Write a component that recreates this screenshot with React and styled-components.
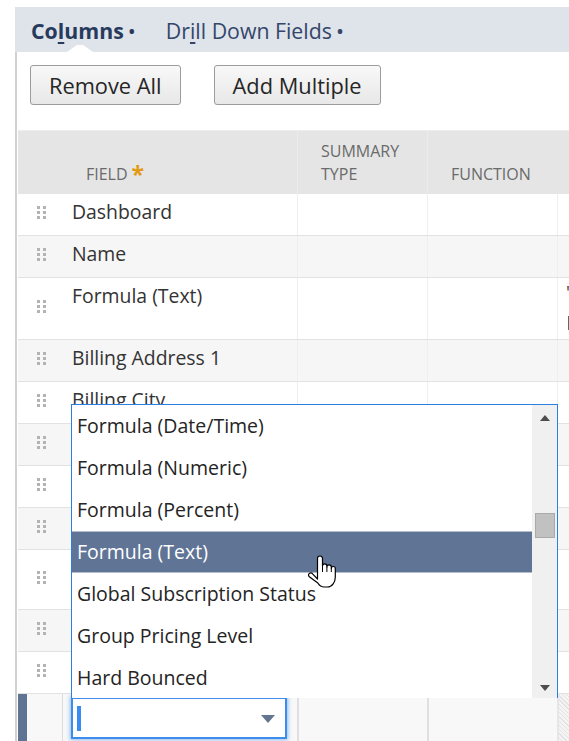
import React from 'react';
import styled, { createGlobalStyle } from 'styled-components';

const GlobalStyle = createGlobalStyle`
  html, body { margin: 0; padding: 0; background: #fff; overflow: hidden; }
  body { font-family: "Open Sans", "Liberation Sans", sans-serif; }
  * { box-sizing: border-box; }
`;

const COLS = '45px 234px 130px 130px 1fr';

const Page = styled.div`
  position: relative;
  width: 569px;
  height: 741px;
  overflow: hidden;
  padding: 7px 0 0 15px;
`;

const TabBar = styled.div`
  height: 45px;
  background: #dfe3ea;
  display: flex;
  align-items: stretch;
  gap: 31px;
  padding-left: 16px;
`;

const Tab = styled.div`
  position: relative;
  display: flex;
  align-items: center;
  padding-top: 2px;
  font-size: 21.3px;
  color: ${p => (p.$active ? '#273a5c' : '#34466a')};
  font-weight: ${p => (p.$active ? 700 : 400)};
  white-space: nowrap;
  u { text-decoration-thickness: 1.5px; text-underline-offset: 3px; }
  ${p => p.$active && `
    &::after {
      content: '';
      position: absolute;
      bottom: 0;
      left: 36px;
      width: 26px;
      height: 7px;
      background: #fff;
      clip-path: polygon(0 100%, 38% 0, 62% 0, 100% 100%);
    }
  `}
`;

const Bullet = styled.span`
  margin-left: 5px;
  font-weight: 700;
  font-size: 16px;
`;

const Panel = styled.div`
  border-left: 2px solid #d2d2d2;
  padding-left: 1px;
`;

const ButtonRow = styled.div`
  display: flex;
  gap: 33px;
  padding: 13px 0 25px 12px;
`;

const Button = styled.button`
  height: 40px;
  padding: 0 18px;
  font-family: inherit;
  font-size: 21.8px;
  color: #262626;
  background: linear-gradient(#f8f8f8, #e8e8e8);
  border: 1px solid #9c9c9c;
  border-radius: 3px;
`;

const Table = styled.div`
  width: 720px;
`;

const HeaderRow = styled.div`
  display: grid;
  grid-template-columns: ${COLS};
  height: 64px;
  background: #e5e5e5;
  border-top: 1px solid #eeeeee;
`;

const HeaderCell = styled.div`
  display: flex;
  align-items: flex-end;
  padding: 0 0 10px 23px;
  font-size: 16px;
  line-height: 23px;
  color: #6a6a6a;
  border-left: ${p => (p.$sep ? '1px solid #ececec' : 'none')};
`;

const Required = styled.span`
  color: #e19a12;
  font-size: 23px;
  font-weight: 700;
  margin-left: 4px;
  align-self: flex-start;
  line-height: 1;
  margin-top: 32px;
`;

const Row = styled.div`
  display: grid;
  grid-template-columns: ${COLS};
  height: ${p => p.$h}px;
  background: ${p => (p.$alt ? '#f6f6f6' : '#ffffff')};
  border-bottom: 1px solid #e2e2e2;
`;

const HandleCell = styled.div`
  display: flex;
  align-items: center;
  padding: 0 0 4px 19px;
`;

const Dots = styled.div`
  display: grid;
  grid-template-columns: 3px 3px;
  grid-auto-rows: 3px;
  column-gap: 3px;
  row-gap: 2px;
  span { background: #b3b3b3; }
`;

const FieldCell = styled.div`
  padding: 6px 0 0 9px;
  font-size: 19.4px;
  line-height: 24px;
  color: #333;
  white-space: nowrap;
`;

const Cell = styled.div`
  border-left: 1px solid #efefef;
`;

const PreviewCell = styled.div`
  border-left: 1px solid #efefef;
  display: flex;
  flex-direction: column;
  padding: 4px 0 0 8px;
  font-size: 18px;
  line-height: 20px;
  color: #444;
  i {
    display: block;
    width: 2px;
    height: 14px;
    margin: 14px 0 0 2px;
    background: #666;
  }
`;

const EditRow = styled.div`
  display: grid;
  grid-template-columns: ${COLS};
  height: 60px;
  background: #f8f8f8;
`;

const EditHandle = styled.div`
  border-left: 9px solid #5f7393;
  border-right: 1px solid #dcdcdc;
`;

const EditField = styled.div`
  padding: 3px 9px 0 8px;
`;

const EditCell = styled.div`
  border-left: 2px solid #e0e0e0;
`;

const Hatch = styled.div`
  border-left: 2px solid #e6e6e6;
  background: repeating-linear-gradient(45deg, #f4f4f4 0 2px, #e3e3e3 2px 3px);
`;

const SelectBox = styled.div`
  position: relative;
  width: 216px;
  height: 42px;
  background: #fff;
  border: 2px solid #3e8dea;
  box-shadow: 0 0 4px 1px rgba(62, 141, 234, 0.55);
  display: flex;
  align-items: center;
  justify-content: space-between;
  padding: 0 10px 0 4px;
`;

const Caret = styled.span`
  width: 4px;
  height: 25px;
  background: #3a8df0;
`;

const DownTri = styled.span`
  width: 0;
  height: 0;
  border-left: 7px solid transparent;
  border-right: 7px solid transparent;
  border-top: 8px solid #637591;
  margin-top: 2px;
`;

const Dropdown = styled.div`
  position: absolute;
  left: -2px;
  bottom: calc(100% + 1px);
  width: 487px;
  height: 294px;
  border: 1px solid #2b7fe3;
  border-bottom: none;
  background: #fff;
  display: flex;
  overflow: hidden;
`;

const List = styled.div`
  flex: 1;
  display: flex;
  flex-direction: column;
`;

const Item = styled.div`
  flex: 0 0 42px;
  padding-left: 5px;
  font-size: 19.5px;
  line-height: 42px;
  white-space: nowrap;
  color: ${p => (p.$selected ? '#ffffff' : '#242424')};
  background: ${p => (p.$selected ? '#607496' : '#ffffff')};
  box-shadow: ${p => (p.$selected ? 'inset 0 1px 0 #b3bcca, inset 0 -1px 0 #b3bcca' : 'none')};
`;

const Track = styled.div`
  flex: 0 0 25px;
  background: #f0f0f0;
  display: flex;
  flex-direction: column;
`;

const ArrowBtn = styled.div`
  flex: 0 0 ${p => p.$h}px;
  display: flex;
  align-items: center;
  justify-content: center;
  &::before {
    content: '';
    border-left: 5px solid transparent;
    border-right: 5px solid transparent;
    ${p => (p.$up ? 'border-bottom: 6px solid #4d4d4d;' : 'border-top: 6px solid #4d4d4d;')}
  }
`;

const Thumb = styled.div`
  width: 20px;
  height: 25px;
  margin: ${p => p.$offset}px 0 0 3px;
  background: #c1c1c1;
  border: 1px solid #aaaaaa;
`;

const Spacer = styled.div`
  flex: 1;
`;

const Cursor = styled.svg`
  position: absolute;
  left: 307px;
  top: 555px;
  width: 30px;
  height: 34px;
`;

const rows = [
  { name: 'Dashboard', h: 42 },
  { name: 'Name', h: 42 },
  { name: 'Formula (Text)', h: 62, preview: true },
  { name: 'Billing Address 1', h: 42 },
  { name: 'Billing City', h: 42 },
  { name: '', h: 42 },
  { name: '', h: 42 },
  { name: '', h: 42 },
  { name: '', h: 60 },
  { name: '', h: 42 },
  { name: '', h: 42 },
];

const options = [
  'Formula (Date/Time)',
  'Formula (Numeric)',
  'Formula (Percent)',
  'Formula (Text)',
  'Global Subscription Status',
  'Group Pricing Level',
  'Hard Bounced',
];

function Handle() {
  return (
    <HandleCell>
      <Dots>
        {Array.from({ length: 6 }).map((_, i) => <span key={i} />)}
      </Dots>
    </HandleCell>
  );
}

export default function App() {
  return (
    <>
      <GlobalStyle />
      <Page>
        <TabBar>
          <Tab $active>Co<u>l</u>umns<Bullet>•</Bullet></Tab>
          <Tab>Dr<u>i</u>ll Down Fields<Bullet>•</Bullet></Tab>
        </TabBar>
        <Panel>
          <ButtonRow>
            <Button>Remove All</Button>
            <Button>Add Multiple</Button>
          </ButtonRow>
          <Table>
            <HeaderRow>
              <HeaderCell />
              <HeaderCell>FIELD<Required>*</Required></HeaderCell>
              <HeaderCell $sep>SUMMARY<br />TYPE</HeaderCell>
              <HeaderCell $sep>FUNCTION</HeaderCell>
              <HeaderCell />
            </HeaderRow>
            {rows.map((r, i) => (
              <Row key={i} $h={r.h} $alt={i % 2 === 1}>
                <Handle />
                <FieldCell>{r.name}</FieldCell>
                <Cell />
                <Cell />
                {r.preview ? (
                  <PreviewCell>'<i /></PreviewCell>
                ) : (
                  <Cell />
                )}
              </Row>
            ))}
            <EditRow>
              <EditHandle />
              <EditField>
                <SelectBox>
                  <Caret />
                  <DownTri />
                  <Dropdown>
                    <List>
                      {options.map(o => (
                        <Item key={o} $selected={o === 'Formula (Text)'}>{o}</Item>
                      ))}
                    </List>
                    <Track>
                      <ArrowBtn $up $h={26} />
                      <Thumb $offset={82} />
                      <Spacer />
                      <ArrowBtn $h={20} />
                    </Track>
                  </Dropdown>
                </SelectBox>
              </EditField>
              <EditCell />
              <EditCell />
              <Hatch />
            </EditRow>
          </Table>
        </Panel>
        <Cursor viewBox="0 0 30 34">
          <path
            d="M10.5 20 V3.5 a2.5 2.5 0 0 1 5 0 V11 a2.2 2.2 0 0 1 4.4 0 V12 a2.2 2.2 0 0 1 4.4 0 V13.5 a2 2 0 0 1 4 0 V22 c0 5 -3 10 -8 10 h-3 c-3 0 -5 -1.5 -6.5 -4 L2 21.5 c-0.8 -1.2 -0.5 -2.6 0.6 -3.2 s2.4 -0.3 3.2 0.8 L10.5 24 Z"
            fill="#fff"
            stroke="#000"
            strokeWidth="1.2"
            strokeLinejoin="round"
          />
          <path d="M15.5 11 V17 M19.9 12 V17 M24.3 13.5 V17" stroke="#000" strokeWidth="1" fill="none" />
        </Cursor>
      </Page>
    </>
  );
}
